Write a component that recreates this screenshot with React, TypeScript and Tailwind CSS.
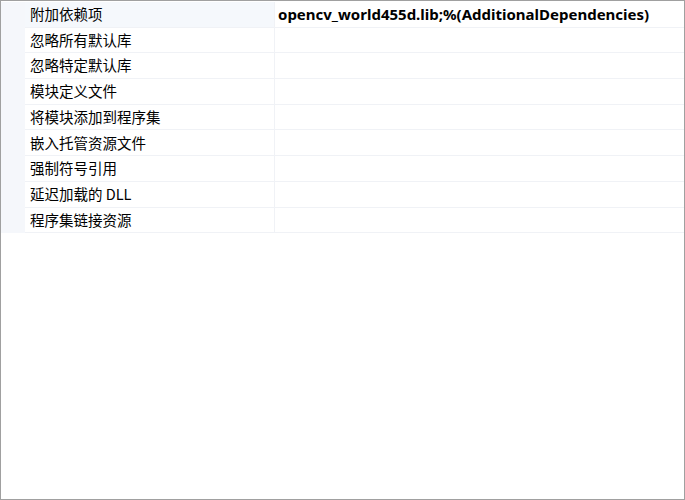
import React from 'react'

const rows = [
  { name: '附加依赖项', value: 'opencv_world455d.lib;%(AdditionalDependencies)' },
  { name: '忽略所有默认库', value: '' },
  { name: '忽略特定默认库', value: '' },
  { name: '模块定义文件', value: '' },
  { name: '将模块添加到程序集', value: '' },
  { name: '嵌入托管资源文件', value: '' },
  { name: '强制符号引用', value: '' },
  { name: '延迟加载的 DLL', value: '' },
  { name: '程序集链接资源', value: '' },
]

export default function App() {
  return (
    <div className="h-[500px] w-[685px] border border-[#a0a0a0] bg-white pt-px font-['Noto_Sans','Noto_Sans_CJK_SC',sans-serif] text-[14px] text-black">
      <div className="flex">
        <div className="w-[24px] shrink-0 bg-[#f5f7fb]" />
        <div className="flex-1">
          {rows.map((row, i) => (
            <div key={row.name} className="flex h-[25.7px] border-b border-[#f0f2f6]">
              <div
                className={`flex w-[250px] shrink-0 items-center border-r border-[#f0f2f6] pl-[5px] ${
                  i === 0 ? 'bg-[#f5f8fc]' : ''
                }`}
              >
                <span className="font-['Noto_Sans_CJK_SC',sans-serif] text-[14.5px] leading-none">{row.name}</span>
              </div>
              <div className="flex flex-1 items-center pl-[3px]">
                {row.value && <span className="text-[15px] font-bold leading-none">{row.value}</span>}
              </div>
            </div>
          ))}
        </div>
      </div>
    </div>
  )
}
